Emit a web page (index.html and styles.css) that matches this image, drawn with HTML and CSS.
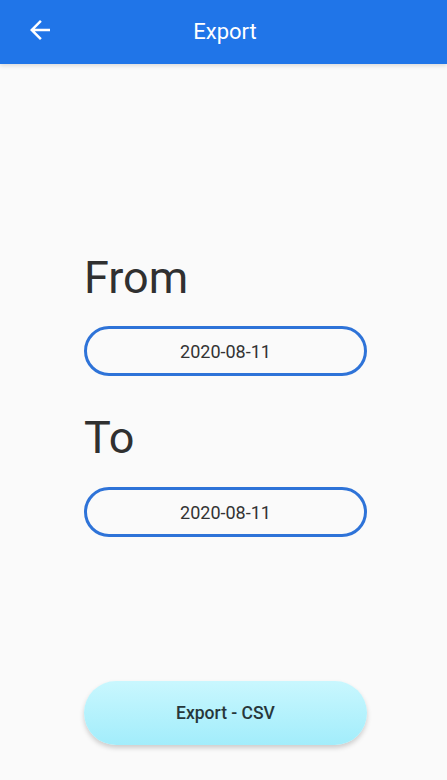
FILE: index.html
```html
<!DOCTYPE html>
<html>
<head>
<meta charset="utf-8">
<link rel="stylesheet" href="styles.css">
</head>
<body>
<header class="appbar">
  <button class="back" aria-label="Back">
    <svg width="30" height="30" viewBox="0 0 24 24"><path d="M20 11H7.83l5.59-5.59L12 4l-8 8 8 8 1.41-1.41L7.83 13H20v-2z" fill="#fff"/></svg>
  </button>
  <h1 class="title">Export</h1>
</header>
<main class="content">
  <div class="label">From</div>
  <div class="field">2020-08-11</div>
  <div class="label label-to">To</div>
  <div class="field">2020-08-11</div>
  <button class="export">Export - CSV</button>
</main>
</body>
</html>
```
FILE: styles.css
```css
html, body {
  margin: 0;
  padding: 0;
  background: #fafafa;
  font-family: Roboto, "Liberation Sans", sans-serif;
  width: 447px;
  height: 780px;
  overflow: hidden;
}
.appbar {
  height: 64px;
  background: #2075e8;
  display: flex;
  align-items: center;
  justify-content: center;
  position: relative;
  box-shadow: 0 2px 4px rgba(0,0,0,0.12);
}
.back {
  position: absolute;
  left: 25px;
  top: 15px;
  width: 30px;
  height: 30px;
  padding: 0;
  border: 0;
  background: none;
  display: flex;
}
.title {
  margin: 0 0 0 3px;
  color: #fff;
  font-size: 22px;
  font-weight: 400;
  line-height: 1;
}
.content {
  display: flex;
  flex-direction: column;
  padding: 191px 80px 0 84px;
}
.label {
  font-size: 45px;
  line-height: 45px;
  height: 45px;
  color: #303030;
  margin-bottom: 26px;
}
.label-to {
  margin-top: 39px;
  margin-bottom: 27px;
}
.field {
  box-sizing: border-box;
  height: 50px;
  border: 3px solid #2e73d8;
  border-radius: 25px;
  display: flex;
  align-items: center;
  justify-content: center;
  font-size: 18px;
  color: #333;
}
.export {
  margin-top: 144px;
  height: 64px;
  border: 0;
  border-radius: 32px;
  background: linear-gradient(#c9f7fe, #a2edfb);
  box-shadow: 0 3px 5px rgba(0,0,0,0.18);
  font-family: Roboto, "Liberation Sans", sans-serif;
  font-size: 17.5px;
  font-weight: 500;
  color: #27373a;
}
```
